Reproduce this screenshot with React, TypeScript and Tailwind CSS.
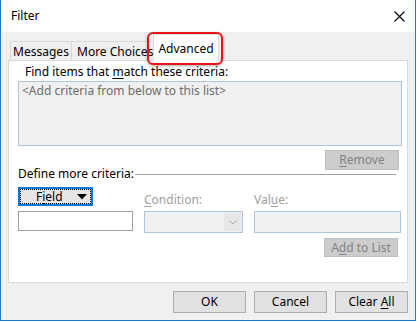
import { ReactNode } from "react";

const font = { fontFamily: '"Noto Sans", "Open Sans", sans-serif' };

function U({ children }: { children: ReactNode }) {
    return <span className="underline underline-offset-2 decoration-1">{children}</span>;
}

function DisabledButton({ children, className = "" }: { children: ReactNode; className?: string }) {
    return (
        <div className={`flex items-center justify-center border border-[#bfbfbf] bg-[#cccccc] text-[#838383] ${className}`}>
            <span>{children}</span>
        </div>
    );
}

function DialogButton({ children }: { children: ReactNode }) {
    return (
        <div className="flex h-[22px] w-[73px] items-center justify-center border border-[#adadad] bg-[#e1e1e1] text-black">
            <span>{children}</span>
        </div>
    );
}

export default function App() {
    return (
        <div className="bg-white" style={font}>
            <div className="flex h-[321px] w-[416px] flex-col border-x border-b border-[#1a7dd4] text-[12px] leading-[16px] text-black">
                {/* title bar */}
                <div className="flex h-[32px] items-center justify-between bg-white pl-[10px] pr-[9px]">
                    <span className="text-[12px]">Filter</span>
                    <svg width="11" height="11" viewBox="0 0 11 11" className="mr-[1px]">
                        <path d="M0.5 0.5 L10.5 10.5 M10.5 0.5 L0.5 10.5" stroke="#000" strokeWidth="1.1" fill="none" />
                    </svg>
                </div>

                {/* body */}
                <div className="relative flex flex-1 flex-col bg-[#f0f0f0] px-[7px]">
                    {/* tabs */}
                    <div className="flex h-[28px] items-end pl-[2px] pt-[3px]">
                        <div className="flex h-[19px] w-[62px] items-center justify-center border border-b-0 border-[#d9d9d9] bg-[#f0f0f0] pt-px">
                            Messages
                        </div>
                        <div className="-ml-px flex h-[19px] w-[85px] items-center justify-start overflow-hidden border border-b-0 border-[#d9d9d9] bg-[#f0f0f0] pl-[5px] pt-px">
                            More Choices
                        </div>
                        <div className="relative z-10 -mb-px -ml-[3px] flex h-[27px] w-[66px] items-start justify-center border border-b-0 border-[#d9d9d9] bg-white pt-[6px]">
                            Advanced
                        </div>
                    </div>

                    {/* red highlight */}
                    <div className="absolute left-[146px] top-0 z-20 h-[33px] w-[76px] rounded-[6px] border-2 border-[#e8141c] shadow-[0_1px_3px_rgba(0,0,0,0.35)]" />

                    {/* panel */}
                    <div className="flex h-[223px] w-[400px] flex-col border border-[#d9d9d9] bg-white">
                        <div className="ml-[16px] mt-[3px]">
                            Find items that <U>m</U>atch these criteria:
                        </div>
                        <div className="ml-[9px] mt-px h-[65px] w-[384px] border border-[#b3c3d6] bg-[#f0f0f0] px-[3px] pt-px text-[#6d6d6d]">
                            &lt;Add criteria from below to this list&gt;
                        </div>
                        <DisabledButton className="ml-[316px] mt-[4px] h-[20px] w-[74px]">
                            <U>R</U>emove
                        </DisabledButton>
                        <div className="-mt-[3px] ml-[9px] flex h-[14px] w-[378px] items-center">
                            <span>Define more criteria:</span>
                            <div className="ml-px h-px flex-1 bg-[#a0a0a0]" />
                        </div>
                        <div className="mt-[6px] flex h-[19px] items-end">
                            <div className="ml-[9px] h-[19px] w-[75px] border-2 border-[#0078d7] bg-[#e5e5e5]">
                                <div className="flex h-full items-center border border-dotted border-black pl-[15px] pr-[3px]">
                                    <span className="flex-1">
                                        F<U>i</U>eld
                                    </span>
                                    <svg width="10" height="6" viewBox="0 0 10 6">
                                        <path d="M0 0 L10 0 L5 5.5 Z" fill="#000" />
                                    </svg>
                                </div>
                            </div>
                            <span className="mb-[-2px] ml-[51px] w-[110px] text-[#a0a0a0]">
                                <U>C</U>ondition:
                            </span>
                            <span className="mb-[-2px] text-[#a0a0a0]">
                                Val<U>u</U>e:
                            </span>
                        </div>
                        <div className="mt-[5px] flex items-start">
                            <div className="ml-[9px] h-[20px] w-[115px] border border-[#a0a0a0] bg-white" />
                            <div className="ml-[11px] flex h-[22px] w-[99px] border border-[#b3c3d6] bg-[#f0f0f0]">
                                <div className="flex-1" />
                                <div className="m-px flex w-[17px] items-center justify-center bg-[#e6e6e6]">
                                    <svg width="8" height="5" viewBox="0 0 8 5">
                                        <path d="M0.5 0.5 L4 4 L7.5 0.5" stroke="#a8a8a8" strokeWidth="1" fill="none" />
                                    </svg>
                                </div>
                            </div>
                            <div className="ml-[11px] h-[22px] w-[147px] border border-[#b3c3d6] bg-[#f0f0f0]" />
                        </div>
                        <DisabledButton className="ml-[315px] mt-[5px] h-[19px] w-[74px]">
                            A<U>d</U>d to List
                        </DisabledButton>
                    </div>

                    {/* dialog buttons */}
                    <div className="mt-[8px] flex justify-end gap-[8px]">
                        <DialogButton>OK</DialogButton>
                        <DialogButton>Cancel</DialogButton>
                        <DialogButton>
                            Clear <U>A</U>ll
                        </DialogButton>
                    </div>
                </div>
            </div>
        </div>
    );
}
